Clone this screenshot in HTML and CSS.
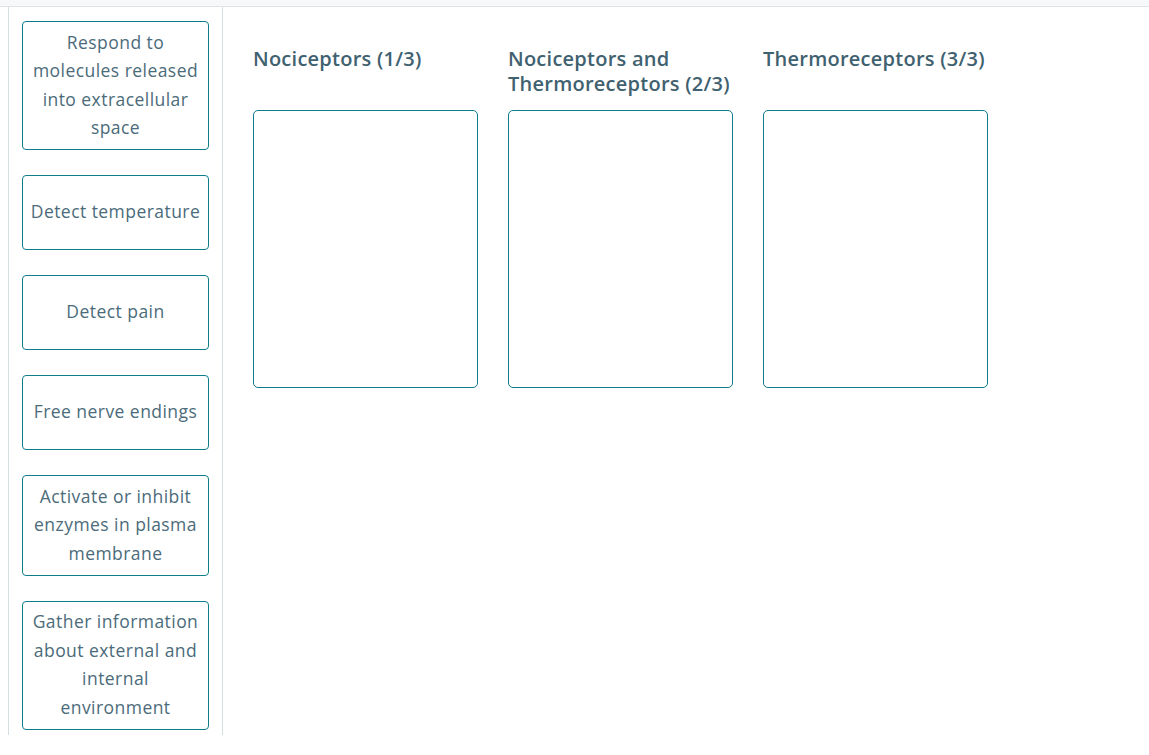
FILE: index.html
```html
<!DOCTYPE html>
<html lang="en">

<head>
    <meta charset="UTF-8">
    <title>Sort the receptors</title>
    <link rel="stylesheet" href="styles.css">
</head>

<body>
    <div class="topbar"></div>
    <div class="workspace">
        <!-- 待分类的卡片 -->
        <ul class="bank">
            <li class="card">Respond to molecules released into extracellular space</li>
            <li class="card">Detect temperature</li>
            <li class="card">Detect pain</li>
            <li class="card">Free nerve endings</li>
            <li class="card">Activate or inhibit enzymes in plasma membrane</li>
            <li class="card">Gather information about external and internal environment</li>
        </ul>

        <!-- 三个分类框 -->
        <div class="targets">
            <h3 class="target-title">Nociceptors (1/3)</h3>
            <h3 class="target-title">Nociceptors and Thermoreceptors (2/3)</h3>
            <h3 class="target-title">Thermoreceptors (3/3)</h3>
            <div class="dropzone"></div>
            <div class="dropzone"></div>
            <div class="dropzone"></div>
        </div>
    </div>
</body>

</html>
```

FILE: styles.css
```css
* {
    box-sizing: border-box;
}

body {
    margin: 0;
    font-family: "Open Sans", "Liberation Sans", sans-serif;
    color: #4b6b7a;
    background: #fff;
}

.topbar {
    height: 7px;
    background: #f7f8f9;
    border-bottom: 1px solid #dde3e6;
}

.workspace {
    display: flex;
    align-items: flex-start;
}

.bank {
    list-style: none;
    margin: 0 0 0 8px;
    width: 215px;
    padding: 14px 13px 5px 13px;
    border-left: 1px solid #d7dee2;
    border-right: 1px solid #d7dee2;
    display: flex;
    flex-direction: column;
    gap: 25px;
}

.card {
    min-height: 75px;
    padding: 5.5px 7px 7.5px;
    border: 1px solid #0d7d8a;
    border-radius: 4px;
    display: flex;
    align-items: center;
    justify-content: center;
    text-align: center;
    font-size: 17.5px;
    letter-spacing: 0.45px;
    line-height: 28.5px;
}

.targets {
    padding: 39px 0 0 30px;
    display: grid;
    grid-template-columns: repeat(3, 225px);
    column-gap: 30px;
    row-gap: 14px;
}

.target-title {
    margin: 0;
    font-size: 20px;
    letter-spacing: 0.25px;
    line-height: 25px;
    font-weight: 600;
    color: #3f6170;
}

.dropzone {
    height: 278px;
    border: 1px solid #0d7d8a;
    border-radius: 5px;
}
```
